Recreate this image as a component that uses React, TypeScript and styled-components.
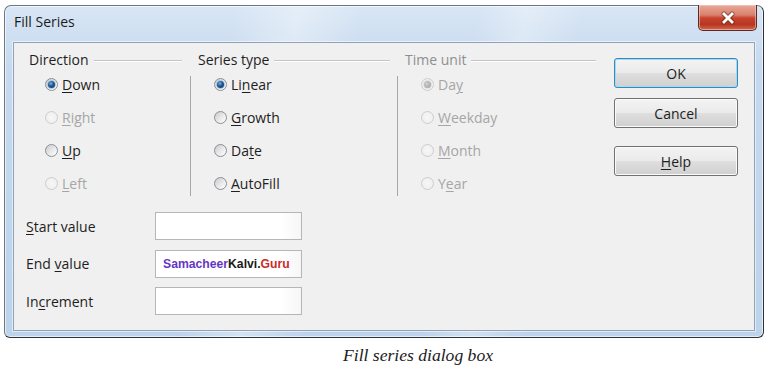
import React from "react";
import styled, { createGlobalStyle, css } from "styled-components";

const GlobalStyle = createGlobalStyle`
  html, body { margin: 0; padding: 0; background: #ffffff; }
  body { font-family: "Open Sans", "Noto Sans", sans-serif; color: #1e1e1e; }
  * { box-sizing: border-box; }
`;

const Page = styled.div`
  width: 768px;
  height: 376px;
  padding: 5px 4px 0;
  display: flex;
  flex-direction: column;
  overflow: hidden;
`;

const Window = styled.div`
  width: 760px;
  height: 333px;
  flex: none;
  border: 1px solid #6b7784;
  border-right-color: #2f3439;
  border-bottom-color: #2f3439;
  border-radius: 7px 7px 6px 6px;
  background:
    linear-gradient(100deg, transparent 28%, rgba(255,255,255,0.35) 36%, transparent 44%, transparent 58%, rgba(255,255,255,0.3) 64%, transparent 71%),
    linear-gradient(180deg, #d8e6f5 0%, #c6d9ee 18%, #bdd3ea 100%);
  box-shadow: inset 0 0 0 1px rgba(255,255,255,0.6);
  padding: 0 8px 6px;
  display: flex;
  flex-direction: column;
`;

const TitleBar = styled.div`
  height: 36px;
  flex: none;
  display: flex;
  align-items: flex-start;
  justify-content: space-between;
`;

const Title = styled.div`
  font-size: 14px;
  line-height: 18px;
  padding: 7px 0 0 1px;
  color: #1b1b1b;
`;

const CloseButton = styled.div`
  width: 59px;
  height: 26px;
  margin: -1px -2px 0 0;
  border: 1px solid #5c2a22;
  border-top: none;
  border-radius: 0 0 5px 5px;
  background: linear-gradient(180deg, #e9a89b 0%, #d9806d 40%, #c7432e 52%, #b8361f 78%, #d06a52 100%);
  box-shadow: inset 0 0 0 1px rgba(255, 210, 200, 0.55);
  display: flex;
  align-items: center;
  justify-content: center;
`;

const Client = styled.div`
  flex: 1;
  background: #f0f0f0;
  border: 1px solid #8ea3ba;
  box-shadow: 0 0 0 1px rgba(255,255,255,0.55);
  padding-top: 9px;
  display: flex;
  flex-direction: column;
`;

const TopArea = styled.div`
  display: flex;
  padding-left: 15px;
  height: 148px;
`;

const Group = styled.div<{ $width: number }>`
  width: ${p => p.$width}px;
  flex: none;
  display: flex;
  flex-direction: column;
`;

const GroupHeader = styled.div<{ $disabled?: boolean }>`
  height: 16px;
  display: flex;
  align-items: center;
  gap: 5px;
  font-size: 14px;
  line-height: 16px;
  color: ${p => (p.$disabled ? "#8f8f8f" : "#1e1e1e")};
  white-space: nowrap;
  &::after {
    content: "";
    flex: 1;
    height: 1px;
    margin-top: 2px;
    background: #c4c4c4;
    border-bottom: 1px solid #ffffff;
    box-sizing: content-box;
  }
`;

const GroupBody = styled.div`
  display: flex;
  flex-direction: column;
  padding-left: 16px;
`;

const RadioRow = styled.label<{ $disabled?: boolean }>`
  height: 33px;
  display: flex;
  align-items: center;
  gap: 4px;
  font-size: 14px;
  color: ${p => (p.$disabled ? "#a6a6a6" : "#1e1e1e")};
  white-space: nowrap;
`;

const RadioCircle = styled.span<{ $checked?: boolean; $disabled?: boolean }>`
  width: 13px;
  height: 13px;
  flex: none;
  border-radius: 50%;
  display: flex;
  align-items: center;
  justify-content: center;
  border: 1px solid ${p => (p.$disabled ? "#cdcdcd" : "#8b8f94")};
  background: ${p =>
    p.$disabled
      ? "radial-gradient(circle at 50% 50%, #f7f7f7 0%, #ececec 100%)"
      : "linear-gradient(135deg, #c9cbcd 0%, #eaeaea 55%, #ffffff 100%)"};
  ${p =>
    p.$checked &&
    css`
      &::after {
        content: "";
        width: 7px;
        height: 7px;
        border-radius: 50%;
        background: ${p.$disabled
          ? "radial-gradient(circle at 40% 40%, #cfcfcf 0%, #9a9a9a 100%)"
          : "radial-gradient(circle at 40% 35%, #7fb0e0 0%, #1d5592 45%, #0b2a4c 100%)"};
        box-shadow: ${p.$disabled ? "0 0 0 1px #e2e2e2" : "0 0 0 1px #a9c8e6"};
      }
    `}
`;

const Separator = styled.div<{ $ml: number; $mr: number }>`
  width: 1px;
  height: 120px;
  flex: none;
  margin: 24px ${p => p.$mr}px 0 ${p => p.$ml}px;
  background: #a7a7a7;
`;

const ButtonColumn = styled.div`
  width: 124px;
  margin-left: 18px;
  padding-top: 6px;
  display: flex;
  flex-direction: column;
`;

const Button = styled.div<{ $default?: boolean; $space: number }>`
  height: 30px;
  margin-top: ${p => p.$space}px;
  border-radius: 3px;
  border: 1px solid ${p => (p.$default ? "#3d86bd" : "#707070")};
  background: linear-gradient(180deg, #f3f3f3 0%, #ebebeb 48%, #dedede 52%, #d0d0d0 100%);
  box-shadow: inset 0 0 0 1px ${p => (p.$default ? "#9fdcf5" : "#fbfbfb")};
  display: flex;
  align-items: center;
  justify-content: center;
  font-size: 14px;
  color: #1e1e1e;
`;

const Form = styled.div`
  margin-top: 12px;
  padding-left: 12px;
  display: grid;
  grid-template-columns: 129px 147px;
  grid-auto-rows: 28px;
  row-gap: 9.5px;
  align-items: center;
`;

const FieldLabel = styled.div`
  font-size: 14px;
  color: #1e1e1e;
  white-space: nowrap;
`;

const TextField = styled.div`
  height: 28px;
  border: 1px solid #b4b6ba;
  background: linear-gradient(90deg, #ffffff 0%, #ffffff 86%, #f6f6f6 100%);
  display: flex;
  align-items: center;
  padding-left: 7px;
  font-family: "Liberation Sans", Arial, sans-serif;
  font-weight: bold;
  font-size: 12.2px;
`;

const Brand = styled.span<{ $color: string }>`
  color: ${p => p.$color};
`;

const Key = styled.span`
  text-decoration: underline;
  text-underline-offset: 2px;
`;

const Caption = styled.div`
  margin-top: 7px;
  padding-left: 339px;
  font-family: "Liberation Serif", "Times New Roman", serif;
  font-style: italic;
  font-size: 17.6px;
  line-height: 20px;
  color: #1c1c1c;
`;

type Opt = { pre: string; mn: string; post: string; checked?: boolean; disabled?: boolean };

const Radio = ({ pre, mn, post, checked, disabled }: Opt) => (
  <RadioRow $disabled={disabled}>
    <RadioCircle $checked={checked} $disabled={disabled} />
    <span>
      {pre}
      <Key>{mn}</Key>
      {post}
    </span>
  </RadioRow>
);

const direction: Opt[] = [
  { pre: "", mn: "D", post: "own", checked: true },
  { pre: "", mn: "R", post: "ight", disabled: true },
  { pre: "", mn: "U", post: "p" },
  { pre: "", mn: "L", post: "eft", disabled: true },
];

const series: Opt[] = [
  { pre: "Li", mn: "n", post: "ear", checked: true },
  { pre: "", mn: "G", post: "rowth" },
  { pre: "Da", mn: "t", post: "e" },
  { pre: "", mn: "A", post: "utoFill" },
];

const time: Opt[] = [
  { pre: "Da", mn: "y", post: "", checked: true, disabled: true },
  { pre: "", mn: "W", post: "eekday", disabled: true },
  { pre: "", mn: "M", post: "onth", disabled: true },
  { pre: "Y", mn: "e", post: "ar", disabled: true },
];

const CloseIcon = () => (
  <svg width="16" height="14" viewBox="0 0 16 14">
    <path d="M4 3 L12 11 M12 3 L4 11" stroke="#5a2016" strokeWidth="5" strokeLinecap="round" opacity="0.55" />
    <path d="M4 3 L12 11 M12 3 L4 11" stroke="#ffffff" strokeWidth="2.8" strokeLinecap="square" />
  </svg>
);

export default function App() {
  return (
    <>
      <GlobalStyle />
      <Page>
        <Window>
          <TitleBar>
            <Title>Fill Series</Title>
            <CloseButton>
              <CloseIcon />
            </CloseButton>
          </TitleBar>
          <Client>
            <TopArea>
              <Group $width={153}>
                <GroupHeader>Direction</GroupHeader>
                <GroupBody>
                  {direction.map(o => (
                    <Radio {...o} key={o.pre + o.mn + o.post} />
                  ))}
                </GroupBody>
              </Group>
              <Separator $ml={8} $mr={7} />
              <Group $width={192}>
                <GroupHeader>Series type</GroupHeader>
                <GroupBody>
                  {series.map(o => (
                    <Radio {...o} key={o.pre + o.mn + o.post} />
                  ))}
                </GroupBody>
              </Group>
              <Separator $ml={7} $mr={7} />
              <Group $width={191}>
                <GroupHeader $disabled>Time unit</GroupHeader>
                <GroupBody>
                  {time.map(o => (
                    <Radio {...o} key={o.pre + o.mn + o.post} />
                  ))}
                </GroupBody>
              </Group>
              <ButtonColumn>
                <Button $default $space={0}>OK</Button>
                <Button $space={10}>Cancel</Button>
                <Button $space={18}>
                  <span>
                    <Key>H</Key>elp
                  </span>
                </Button>
              </ButtonColumn>
            </TopArea>
            <Form>
              <FieldLabel>
                <Key>S</Key>tart value
              </FieldLabel>
              <TextField />
              <FieldLabel>
                End <Key>v</Key>alue
              </FieldLabel>
              <TextField>
                <Brand $color="#6337c4">Samacheer</Brand>
                <Brand $color="#1a1a1a">Kalvi.</Brand>
                <Brand $color="#cc2a2a">Guru</Brand>
              </TextField>
              <FieldLabel>
                In<Key>c</Key>rement
              </FieldLabel>
              <TextField />
            </Form>
          </Client>
        </Window>
        <Caption>Fill series dialog box</Caption>
      </Page>
    </>
  );
}
